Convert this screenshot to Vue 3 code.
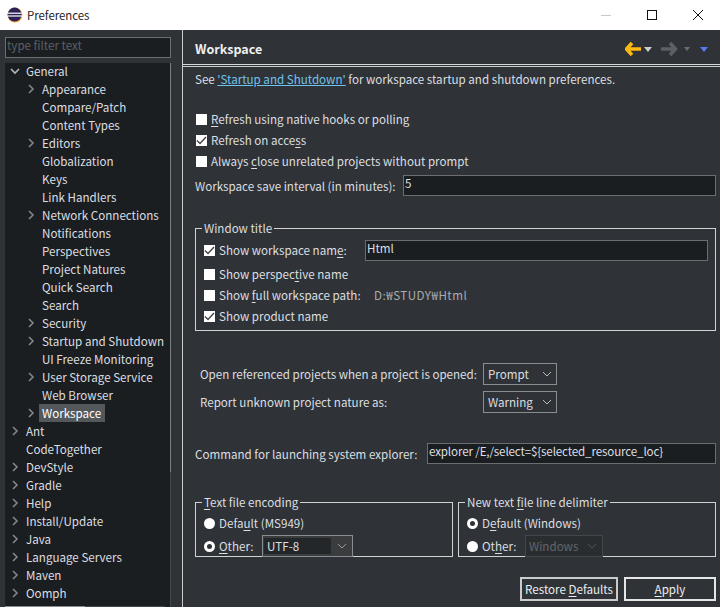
<script setup>
const tree = [
  { t: 'General', d: 0, open: true },
  { t: 'Appearance', d: 1, arrow: true },
  { t: 'Compare/Patch', d: 1 },
  { t: 'Content Types', d: 1 },
  { t: 'Editors', d: 1, arrow: true },
  { t: 'Globalization', d: 1 },
  { t: 'Keys', d: 1 },
  { t: 'Link Handlers', d: 1 },
  { t: 'Network Connections', d: 1, arrow: true },
  { t: 'Notifications', d: 1 },
  { t: 'Perspectives', d: 1 },
  { t: 'Project Natures', d: 1 },
  { t: 'Quick Search', d: 1 },
  { t: 'Search', d: 1 },
  { t: 'Security', d: 1, arrow: true },
  { t: 'Startup and Shutdown', d: 1, arrow: true },
  { t: 'UI Freeze Monitoring', d: 1 },
  { t: 'User Storage Service', d: 1, arrow: true },
  { t: 'Web Browser', d: 1 },
  { t: 'Workspace', d: 1, arrow: true, sel: true },
  { t: 'Ant', d: 0, arrow: true },
  { t: 'CodeTogether', d: 0 },
  { t: 'DevStyle', d: 0, arrow: true },
  { t: 'Gradle', d: 0, arrow: true },
  { t: 'Help', d: 0, arrow: true },
  { t: 'Install/Update', d: 0, arrow: true },
  { t: 'Java', d: 0, arrow: true },
  { t: 'Language Servers', d: 0, arrow: true },
  { t: 'Maven', d: 0, arrow: true },
  { t: 'Oomph', d: 0, arrow: true }
]
</script>

<template>
  <div class="win">
    <header class="titlebar">
      <svg class="logo" width="16" height="16" viewBox="0 0 16 16">
        <circle cx="8" cy="8" r="7.5" fill="#f7a545" />
        <circle cx="7.6" cy="7.6" r="7" fill="#2c2255" />
        <rect x="0.5" y="5.6" width="15" height="1.2" fill="#fff" />
        <rect x="0.5" y="8.4" width="15" height="1.2" fill="#fff" />
      </svg>
      <span class="wintitle">Preferences</span>
      <div class="wbtns">
        <svg width="12" height="12" viewBox="0 0 12 12"><path d="M1 6.5h10" stroke="#c8c8c8" /></svg>
        <svg width="12" height="12" viewBox="0 0 12 12"><rect x="1.5" y="1.5" width="9" height="9" fill="none" stroke="#111" /></svg>
        <svg width="12" height="12" viewBox="0 0 12 12"><path d="M1 1l10 10M11 1L1 11" stroke="#111" /></svg>
      </div>
    </header>

    <div class="body">
      <aside class="side">
        <div class="filter">type filter text</div>
        <div class="tree">
          <div
            v-for="n in tree"
            :key="n.t"
            class="node"
            :class="n.d ? 'deep' : ''"
          >
            <svg v-if="n.open" class="chev" width="10" height="10" viewBox="0 0 10 10">
              <path d="M1 3l4 4 4-4" fill="none" stroke="#b4b8bb" stroke-width="1.6" />
            </svg>
            <svg v-else-if="n.arrow" class="chev" width="10" height="10" viewBox="0 0 10 10">
              <path d="M3 1l4 4-4 4" fill="none" stroke="#80868a" stroke-width="1.6" />
            </svg>
            <span v-else class="chev"></span>
            <span class="label" :class="{ sel: n.sel }">{{ n.t }}</span>
          </div>
          <div class="vscroll"></div>
          <div class="hscroll"></div>
        </div>
      </aside>

      <main class="main">
        <div class="pagehead">
          <h1>Workspace</h1>
          <div class="tools">
            <svg width="18" height="16" viewBox="0 0 18 16">
              <path d="M7 2L1.5 8 7 14M2 8h14" fill="none" stroke="#fdb813" stroke-width="3.5" />
            </svg>
            <i class="tri light"></i>
            <svg class="fwd" width="18" height="16" viewBox="0 0 18 16">
              <path d="M10 2l5.5 6L10 14M15 8H1" fill="none" stroke="#5b6167" stroke-width="3.5" />
            </svg>
            <i class="tri dim"></i>
            <i class="tri blue"></i>
          </div>
        </div>

        <div class="page">
          <p class="see">See <a>'Startup and Shutdown'</a> for workspace startup and shutdown preferences.</p>

          <div class="checks">
            <label class="chk"><span class="box"></span><span><u>R</u>efresh using native hooks or polling</span></label>
            <label class="chk"><span class="box on"><svg width="13" height="13" viewBox="0 0 13 13"><path d="M2 6.5l3 3 6-6.5" fill="none" stroke="#444" stroke-width="1.4" /></svg></span><span>Refresh on acce<u>s</u>s</span></label>
            <label class="chk"><span class="box"></span><span>Always <u>c</u>lose unrelated projects without prompt</span></label>
          </div>

          <div class="interval">
            <span class="lab">Workspace save interval (in minutes):</span>
            <div class="input grow">5</div>
          </div>

          <fieldset class="group title-group">
            <legend>Window title</legend>
            <div class="gline first">
              <label class="chk"><span class="box on"><svg width="13" height="13" viewBox="0 0 13 13"><path d="M2 6.5l3 3 6-6.5" fill="none" stroke="#444" stroke-width="1.4" /></svg></span><span>Show workspace nam<u>e</u>:</span></label>
              <div class="input grow name">Html</div>
            </div>
            <label class="chk"><span class="box"></span><span>Show perspec<u>t</u>ive name</span></label>
            <div class="gline pathline">
              <label class="chk"><span class="box"></span><span>Show <u>f</u>ull workspace path:</span></label>
              <span class="path">D:₩STUDY₩Html</span>
            </div>
            <label class="chk"><span class="box on"><svg width="13" height="13" viewBox="0 0 13 13"><path d="M2 6.5l3 3 6-6.5" fill="none" stroke="#444" stroke-width="1.4" /></svg></span><span>Show product name</span></label>
          </fieldset>

          <div class="combos">
            <div class="combo-row">
              <span class="clabel">Open referenced projects when a project is opened:</span>
              <div class="select"><span>Prompt</span><svg width="10" height="6" viewBox="0 0 10 6"><path d="M1 1l4 4 4-4" fill="none" stroke="#bbb" /></svg></div>
            </div>
            <div class="combo-row">
              <span class="clabel">Report unknown project nature as:</span>
              <div class="select"><span>Warning</span><svg width="10" height="6" viewBox="0 0 10 6"><path d="M1 1l4 4 4-4" fill="none" stroke="#bbb" /></svg></div>
            </div>
          </div>

          <div class="command">
            <span class="lab">Command for launching system explorer:</span>
            <div class="input grow cmd">explorer /E,/select=${selected_resource_loc}</div>
          </div>

          <div class="pair">
            <fieldset class="group small">
              <legend><u>T</u>ext file encoding</legend>
              <label class="chk"><span class="radio"></span><span>Defa<u>u</u>lt (MS949)</span></label>
              <div class="gline other">
                <label class="chk"><span class="radio on"></span><span><u>O</u>ther:</span></label>
                <div class="select enc"><span class="val">UTF-8</span><svg width="10" height="6" viewBox="0 0 10 6"><path d="M1 1l4 4 4-4" fill="none" stroke="#999" /></svg></div>
              </div>
            </fieldset>
            <fieldset class="group small">
              <legend>New text <u>f</u>ile line delimiter</legend>
              <label class="chk"><span class="radio on"></span><span>D<u>e</u>fault (Windows)</span></label>
              <div class="gline other">
                <label class="chk"><span class="radio"></span><span>Ot<u>h</u>er:</span></label>
                <div class="select delim"><span class="val">Windows</span><svg width="10" height="6" viewBox="0 0 10 6"><path d="M1 1l4 4 4-4" fill="none" stroke="#555" /></svg></div>
              </div>
            </fieldset>
          </div>

          <div class="actions">
            <button class="btn restore">Restore <u>D</u>efaults</button>
            <button class="btn apply"><u>A</u>pply</button>
          </div>
        </div>
      </main>
    </div>
  </div>
</template>

<style>
html, body { margin: 0; background: #2f3337; }
</style>

<style scoped>
.win {
  width: 720px;
  height: 607px;
  overflow: hidden;
  display: flex;
  flex-direction: column;
  font: 11.6px/18px "Noto Sans CJK KR", "Noto Sans", sans-serif;
  color: #dcdfe1;
  background: #2f3337;
}
u { text-underline-offset: 2px; text-decoration-thickness: 1px; }
.titlebar {
  height: 30px;
  flex: none;
  box-sizing: border-box;
  padding: 0 0 1px 7px;
  background: #fff;
  color: #222;
  display: flex;
  align-items: center;
}
.logo { margin-right: 4px; }
.wintitle { font-size: 11.4px; }
.wbtns {
  margin-left: auto;
  display: flex;
  gap: 34px;
  padding-right: 16px;
}
.body { flex: 1; display: flex; min-height: 0; }
.side {
  width: 183px;
  flex: none;
  box-sizing: border-box;
  padding: 7px 11px 0 5px;
  border-right: 1px solid #c9cbcc;
  background: #2f3337;
}
.filter {
  height: 21px;
  box-sizing: border-box;
  border: 1px solid #6a6e71;
  background: #1b1e21;
  color: #5b6064;
  padding-left: 1px;
  line-height: 15px;
}
.tree {
  margin-top: 5px;
  background: #1b1e21;
  height: 545px;
  position: relative;
  overflow: hidden;
}
.node {
  height: 18px;
  display: flex;
  align-items: center;
  padding-left: 5px;
  white-space: nowrap;
}
.node:first-child { margin-top: -1px; }
.node.deep { padding-left: 21px; }
.chev { width: 10px; height: 10px; margin-right: 6px; flex: none; }
.label { padding: 0 3px 0 0; }
.label.sel { background: #54585b; color: #fff; margin-left: -3px; padding: 0 4px 0 3px; height: 18px; }
.vscroll {
  position: absolute;
  top: 0;
  right: 0;
  width: 1px;
  height: 100%;
  background: linear-gradient(#7b7f82 0 75%, #44484b 75%);
}
.hscroll {
  position: absolute;
  left: 0;
  right: 6px;
  bottom: 1px;
  height: 1px;
  background: linear-gradient(90deg, #8a8e90 0 50%, #44484b 50%);
}
.main { flex: 1; min-width: 0; display: flex; flex-direction: column; }
.pagehead {
  height: 35px;
  flex: none;
  box-sizing: border-box;
  border-bottom: 1px solid #d5d6d7;
  box-shadow: 0 1px 0 #2f3337, 0 2px 0 #c9cbcc;
  display: flex;
  align-items: center;
  padding: 4px 12px 0 12px;
  background: #2f3337;
}
h1 { margin: 0; font-size: 12.5px; font-weight: 700; color: #f0f0f0; }
.tools { margin-left: auto; display: flex; align-items: center; }
.tri {
  width: 0;
  height: 0;
  border-left: 4.5px solid transparent;
  border-right: 4.5px solid transparent;
  border-top: 5px solid #ccc;
}
.tri.light { margin: 0 8px 0 1px; }
.fwd { margin-right: 6px; }
.tri.dim { border-top-color: #6a6e72; border-left-width: 3.5px; border-right-width: 3.5px; border-top-width: 4px; margin-right: 10px; }
.tri.blue { border-top-color: #5a78f0; }
.page { padding: 5px 4px 0 12px; flex: 1; min-height: 0; }
.see { margin: 0; line-height: 18px; }
a { color: #6fc3ee; text-decoration: underline; }
.checks { margin-top: 22px; display: flex; flex-direction: column; gap: 3px; }
.chk { display: flex; align-items: center; gap: 4px; white-space: nowrap; height: 18px; }
.box {
  width: 11px;
  height: 11px;
  background: #fff;
  margin-left: 1px;
  flex: none;
  display: flex;
  align-items: center;
  justify-content: center;
}
.box svg { flex: none; }
.radio {
  width: 11px;
  height: 11px;
  background: #fff;
  border-radius: 50%;
  margin-left: 1px;
  flex: none;
  box-sizing: border-box;
}
.radio.on { border: 3px solid #fff; background: #2f3337; }
.interval, .command { display: flex; align-items: center; gap: 8px; white-space: nowrap; }
.interval { margin-top: 5px; }
.interval .lab { width: 200px; }
.command .lab { width: 224px; }
.input {
  height: 21px;
  box-sizing: border-box;
  border: 1px solid #6a6e71;
  background: #1b1e21;
  padding-left: 1px;
  line-height: 14px;
  white-space: nowrap;
}
.cmd { letter-spacing: -0.14px; }
.grow { flex: 1; min-width: 0; }
.group {
  margin: 0;
  border: 1px solid #d0d2d3;
  padding: 0;
  min-width: 0;
}
.group legend { padding: 0 2px; margin-left: -1px; line-height: 16px; }
.title-group {
  margin-top: 24px;
  height: 111px;
  box-sizing: border-box;
  padding: 4px 7px 0 7px;
  display: flex;
  flex-direction: column;
  gap: 3px;
}
.gline { display: flex; align-items: center; }
.gline.first { height: 20px; margin-bottom: 2px; }
.first .chk { width: 162px; }
.pathline .chk { width: 171px; }
.path { color: #a9adb0; letter-spacing: 0.5px; }
.combos { margin-top: 32px; padding-left: 5px; display: flex; flex-direction: column; gap: 7px; }
.combo-row { display: flex; align-items: center; height: 21px; }
.clabel { width: 283px; white-space: nowrap; }
.select {
  width: 74px;
  height: 22px;
  box-sizing: border-box;
  border: 1px solid #8a8d8f;
  display: flex;
  align-items: center;
  justify-content: space-between;
  padding: 0 4px 0 4px;
  background: #2f3337;
}
.command { margin-top: 31px; }
.pair { display: grid; grid-template-columns: 258px 258px; gap: 5px; margin-top: 30px; }
.small {
  height: 63px;
  box-sizing: border-box;
  padding: 4px 7px 0 7px;
  display: flex;
  flex-direction: column;
  gap: 3px;
}
.other .chk { width: 59px; }
.enc { width: 91px; background: #3a3c3e; padding: 0 5px 0 1px; }
.enc .val { background: #24272a; flex: 1; padding-left: 3px; margin-right: 6px; height: 16px; line-height: 16px; }
.delim { width: 78px; background: #2a2d30; border-color: #44474a; color: #62676b; padding: 0 5px 0 3px; }
.delim .val { flex: 1; }
.actions { display: flex; justify-content: flex-end; gap: 6px; margin-top: 20px; }
.btn {
  height: 24px;
  box-sizing: border-box;
  border: 2px solid #c9cbcc;
  background: #2f3337;
  color: #eceeef;
  font: inherit;
  padding: 0;
}
.restore { width: 98px; }
.apply { width: 92px; border-color: #e4e5e6; }
</style>
